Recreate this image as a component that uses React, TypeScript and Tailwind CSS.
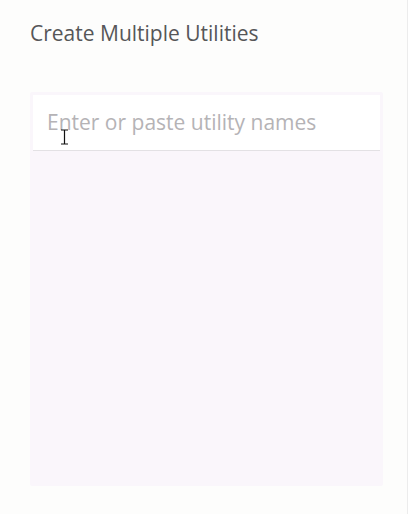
export default function App() {
  return (
    <div
      className="relative h-[514px] w-[408px] overflow-hidden border-r border-[#ececec] bg-[#fdfdfc] pl-[30px] pr-[24px] pt-[19px]"
      style={{ fontFamily: '"Open Sans", sans-serif' }}
    >
      <h2 className="text-[21px] leading-[29px] text-[#565658]">Create Multiple Utilities</h2>
      <div className="mt-[44px] h-[394px] rounded-[2px] bg-[#faf6fb] p-[3px]">
        <div className="flex h-[56px] items-center border-b border-[#e3e1e4] bg-white px-[14px]">
          <span className="text-[21px] text-[#b5b3b6]">Enter or paste utility names</span>
        </div>
      </div>
      <svg className="absolute left-[60px] top-[129px]" width="9" height="16" viewBox="0 0 9 16">
        <path d="M1 1h7M4.5 1v14M1 15h7" stroke="#111" strokeWidth="1.2" fill="none" />
      </svg>
    </div>
  );
}
